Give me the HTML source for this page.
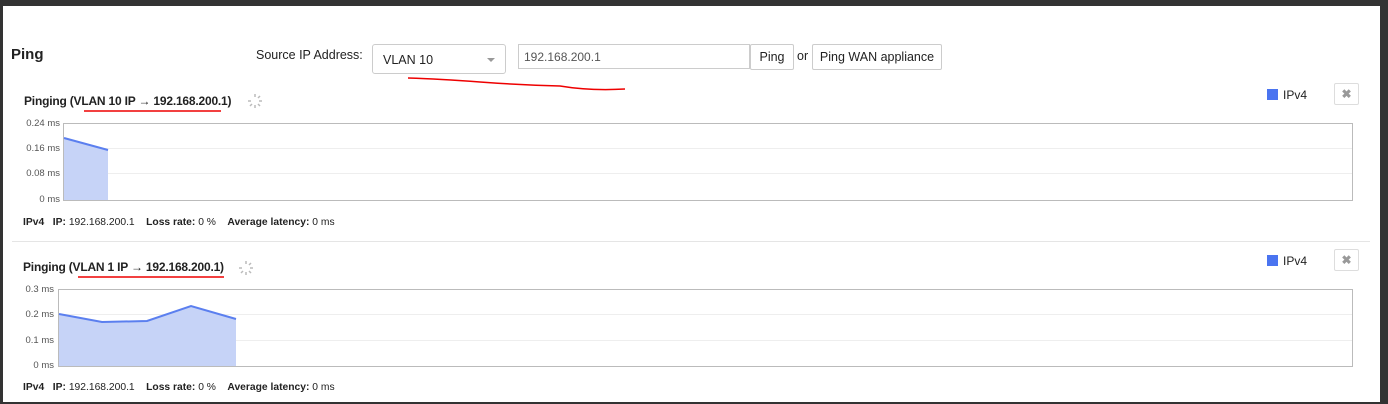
<!DOCTYPE html><html><head><style>
body{margin:0;width:1388px;height:404px;background:#333;position:relative;overflow:hidden;font-family:"Liberation Sans",sans-serif;color:#222}
.p{position:absolute;left:3px;top:6px;width:1377px;height:396px;background:#fff}
.a{position:absolute;white-space:nowrap}
.ax{font-size:9.5px;color:#555;text-align:right;width:40px}
.ft{font-size:10.3px}
.ft b{font-weight:bold}
.close{position:absolute;width:23px;height:20px;border:1px solid #ddd;border-radius:2px;color:#999;font-size:12px;text-align:center;line-height:20px;font-weight:bold}
.tt{font-size:12px;font-weight:bold;letter-spacing:-0.2px}
</style></head><body>
<div class="p"></div>
<div class="a" style="left:11px;top:46px;font-size:15px;font-weight:bold">Ping</div>
<div class="a" style="left:256px;top:48px;font-size:12.5px">Source IP Address:</div>
<div class="a" style="left:372px;top:44px;width:134px;height:30px;border:1px solid #ccc;border-radius:3px;font-size:12.5px;line-height:30px;box-sizing:border-box;padding-left:10px">VLAN 10<span style="position:absolute;right:10px;top:13px;border:4px solid transparent;border-top:4px solid #999"></span></div>
<div class="a" style="left:518px;top:44px;width:232px;height:25px;border:1px solid #ccc;font-size:12px;line-height:24px;box-sizing:border-box;padding-left:5px;color:#555">192.168.200.1</div>
<div class="a" style="left:750px;top:44px;width:44px;height:26px;border:1px solid #ccc;border-radius:2px;font-size:12.5px;line-height:24px;text-align:center;box-sizing:border-box;background:#fff">Ping</div>
<div class="a" style="left:797px;top:49px;font-size:12.5px">or</div>
<div class="a" style="left:812px;top:44px;width:130px;height:26px;border:1px solid #ccc;border-radius:2px;font-size:12.5px;line-height:24px;text-align:center;box-sizing:border-box;background:#fff">Ping WAN appliance</div>
<svg class="a" style="left:0;top:0" width="1388" height="404">
<path d="M408 78 Q440 79 480 82 T560 86 Q590 91 625 89" stroke="#e00" stroke-width="1.5" fill="none"/>
<line x1="84" y1="111" x2="221" y2="111" stroke="#e00" stroke-width="1.5"/>
<line x1="78" y1="277" x2="224" y2="277" stroke="#e00" stroke-width="1.5"/>
<rect x="63.5" y="123.5" width="1289" height="77" fill="#fff" stroke="#bbb"/>
<line x1="64" y1="148.5" x2="1352" y2="148.5" stroke="#eee"/>
<line x1="64" y1="173.5" x2="1352" y2="173.5" stroke="#eee"/>
<path d="M64 138 L108 150 L108 200 L64 200Z" fill="#c6d3f7"/>
<path d="M64 138 L108 150" stroke="#5b7fef" stroke-width="2" fill="none"/>
<rect x="58.5" y="289.5" width="1294" height="77" fill="#fff" stroke="#bbb"/>
<line x1="59" y1="314.5" x2="1352" y2="314.5" stroke="#eee"/>
<line x1="59" y1="340.5" x2="1352" y2="340.5" stroke="#eee"/>
<path d="M59 314 L102 322 L147 321 L191 306 L236 319 L236 366 L59 366Z" fill="#c6d3f7"/>
<path d="M59 314 L102 322 L147 321 L191 306 L236 319" stroke="#5b7fef" stroke-width="2" fill="none"/>
<line x1="12" y1="241.5" x2="1370" y2="241.5" stroke="#e5e5e5"/>
<g stroke="#bbb" stroke-width="1.5"><g transform="translate(255,101)"><line x1="0" y1="-7" x2="0" y2="-4"/><line x1="5" y1="-5" x2="3" y2="-3"/><line x1="7" y1="0" x2="4" y2="0"/><line x1="5" y1="5" x2="3" y2="3"/><line x1="0" y1="7" x2="0" y2="4"/><line x1="-5" y1="5" x2="-3" y2="3"/><line x1="-7" y1="0" x2="-4" y2="0"/></g>
<g transform="translate(246,268)"><line x1="0" y1="-7" x2="0" y2="-4"/><line x1="5" y1="-5" x2="3" y2="-3"/><line x1="7" y1="0" x2="4" y2="0"/><line x1="5" y1="5" x2="3" y2="3"/><line x1="0" y1="7" x2="0" y2="4"/><line x1="-5" y1="5" x2="-3" y2="3"/><line x1="-7" y1="0" x2="-4" y2="0"/></g></g>
<rect x="1267" y="89" width="11" height="11" fill="#4a74f0"/>
<rect x="1267" y="255" width="11" height="11" fill="#4a74f0"/>
</svg>
<div class="a tt" style="left:24px;top:94px">Pinging (VLAN 10 IP → 192.168.200.1)</div>
<div class="a tt" style="left:23px;top:260px">Pinging (VLAN 1 IP → 192.168.200.1)</div>
<div class="a" style="left:1283px;top:88px;font-size:12px">IPv4</div>
<div class="a" style="left:1283px;top:254px;font-size:12px">IPv4</div>
<div class="close" style="left:1334px;top:83px">✖</div>
<div class="close" style="left:1334px;top:249px">✖</div>
<div class="a ax" style="left:20px;top:118px">0.24 ms</div>
<div class="a ax" style="left:20px;top:143px">0.16 ms</div>
<div class="a ax" style="left:20px;top:168px">0.08 ms</div>
<div class="a ax" style="left:20px;top:194px">0 ms</div>
<div class="a ax" style="left:14px;top:284px">0.3 ms</div>
<div class="a ax" style="left:14px;top:309px">0.2 ms</div>
<div class="a ax" style="left:14px;top:335px">0.1 ms</div>
<div class="a ax" style="left:14px;top:360px">0 ms</div>
<div class="a ft" style="left:23px;top:217px"><b>IPv4</b>&nbsp;&nbsp;&nbsp;<b>IP:</b> 192.168.200.1&nbsp;&nbsp;&nbsp;&nbsp;<b>Loss rate:</b> 0 %&nbsp;&nbsp;&nbsp;&nbsp;<b>Average latency:</b> 0 ms</div>
<div class="a ft" style="left:23px;top:382px"><b>IPv4</b>&nbsp;&nbsp;&nbsp;<b>IP:</b> 192.168.200.1&nbsp;&nbsp;&nbsp;&nbsp;<b>Loss rate:</b> 0 %&nbsp;&nbsp;&nbsp;&nbsp;<b>Average latency:</b> 0 ms</div>
</body></html>
